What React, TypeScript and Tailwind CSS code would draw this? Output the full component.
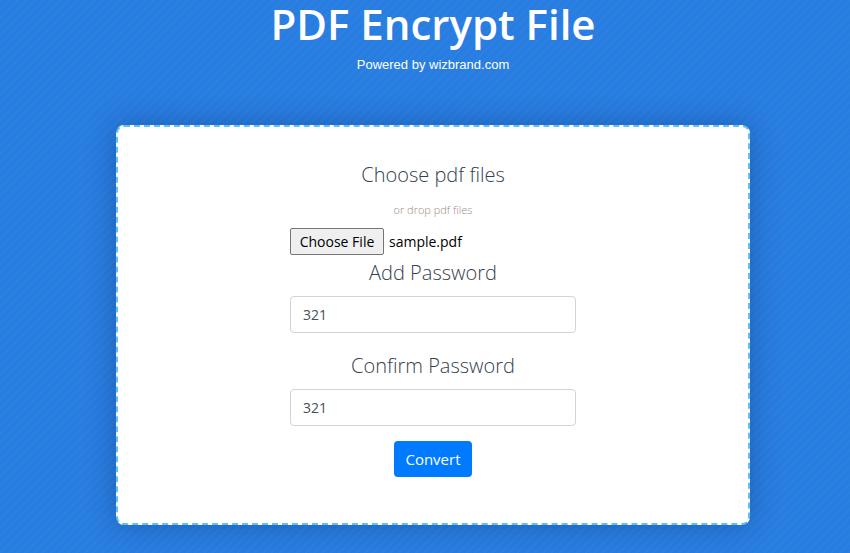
export default function App() {
  return (
    <div className="min-h-screen w-full bg-[#287de0] bg-[repeating-linear-gradient(135deg,rgba(255,255,255,0.025)_0px,rgba(255,255,255,0.025)_2px,transparent_2px,transparent_6px)] pl-4 font-['Open_Sans',sans-serif]">
      <header className="text-center">
        <h1 className="text-[42px] font-semibold leading-[48px] text-white">
          PDF Encrypt File
        </h1>
        <p className="mt-[9px] font-['Liberation_Sans',Arial,sans-serif] text-[13px] leading-4 text-white">
          Powered by wizbrand.com
        </p>
      </header>

      <div className="mx-auto mt-[52px] w-[634px] rounded-lg border-2 border-dashed border-[#5ec3f0] bg-white pt-[35px] pb-[46px] shadow-[0_0_30px_rgba(0,20,80,0.3)]">
        <h2 className="text-center text-[20px] font-light leading-[26px] text-[#34414c]">
          Choose pdf files
        </h2>
        <p className="mt-[14px] text-center text-[11px] font-light leading-4 text-[#9a8a7c]">
          or drop pdf files
        </p>

        <div className="mx-auto w-[286px]">
          <div className="mt-[10px] flex h-[27px] items-center gap-[5px]">
            <button
              type="button"
              className="h-[27px] w-[94px] rounded-[2px] border border-[#767676] bg-[#efefef] text-[14px] leading-none text-black"
            >
              Choose File
            </button>
            <span className="text-[14px] text-black">sample.pdf</span>
          </div>
        </div>

        <h2 className="mt-[5px] text-center text-[20px] font-light leading-[26px] text-[#34414c]">
          Add Password
        </h2>
        <div className="mx-auto mt-[10px] w-[286px]">
          <input
            readOnly
            value="321"
            className="h-[37px] w-full rounded border border-[#ced4da] px-3 text-[14px] text-[#495057] outline-none"
          />
        </div>

        <h2 className="mt-[20px] text-center text-[20px] font-light leading-[26px] text-[#34414c]">
          Confirm Password
        </h2>
        <div className="mx-auto mt-[10px] w-[286px]">
          <input
            readOnly
            value="321"
            className="h-[37px] w-full rounded border border-[#ced4da] px-3 text-[14px] text-[#495057] outline-none"
          />
        </div>

        <div className="mt-[15px] flex justify-center">
          <button
            type="button"
            className="h-[36px] w-[78px] rounded bg-[#007bff] text-[15px] text-white"
          >
            Convert
          </button>
        </div>
      </div>
    </div>
  );
}
